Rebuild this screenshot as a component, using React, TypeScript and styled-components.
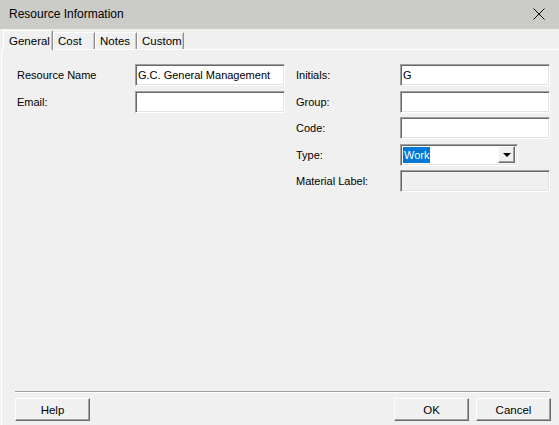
import styled, { createGlobalStyle } from 'styled-components';

const GlobalStyle = createGlobalStyle`
   html, body {
      margin: 0;
      padding: 0;
      background: #f0f0f0;
   }
   * {
      box-sizing: border-box;
   }
`;

const font = `'Segoe UI', 'Liberation Sans', Arial, sans-serif`;

const Window = styled.div`
   width: 559px;
   height: 425px;
   display: flex;
   flex-direction: column;
   background: #f0f0f0;
   font-family: ${font};
   font-size: 11px;
   color: #000;
   overflow: hidden;
`;

const TitleBar = styled.div`
   height: 29px;
   flex: none;
   display: flex;
   align-items: center;
   justify-content: space-between;
   padding: 0 14px 1px 9px;
   background: #cbccc8;
`;

const TitleText = styled.span`
   font-size: 12px;
`;

const CloseIcon = styled.svg`
   width: 12px;
   height: 12px;
   display: block;
`;

const TabStrip = styled.div`
   height: 20px;
   flex: none;
   display: flex;
   align-items: flex-end;
   padding-left: 3px;
`;

const Tab = styled.div<{ $active?: boolean; $width: number }>`
   height: ${(p) => (p.$active ? '20px' : '17px')};
   width: ${(p) => p.$width}px;
   padding: ${(p) => (p.$active ? '3px 0 0 5px' : '1px 0 0 4px')};
   border-left: 1px solid #fff;
   border-top: 1px solid #fff;
   border-right: 1px solid #8e8e8e;
   box-shadow: inset -1px 0 0 #c8c8c8;
   background: #f0f0f0;
   font-size: 11.5px;
   line-height: 15px;
   white-space: nowrap;
   position: relative;
   z-index: ${(p) => (p.$active ? 1 : 0)};
   margin-bottom: ${(p) => (p.$active ? '-1px' : '0')};
`;

const Panel = styled.div`
   flex: 1;
   display: flex;
   flex-direction: column;
   border-top: 1px solid #fff;
   border-left: 1px solid #fff;
   margin-left: 1px;
   padding: 14px 8px 4px 13px;
`;

const Form = styled.div`
   display: grid;
   grid-template-columns: 120px 150px 9px 106px 150px;
   grid-auto-rows: 22px;
   row-gap: 4.5px;
   align-items: center;
`;

const Label = styled.label<{ $col: number }>`
   grid-column: ${(p) => p.$col};
   padding-left: 2px;
   font-size: 11px;
`;

const Field = styled.div<{ $col: number; $disabled?: boolean }>`
   grid-column: ${(p) => p.$col};
   height: 22px;
   display: flex;
   align-items: center;
   padding-left: 2px;
   background: ${(p) => (p.$disabled ? '#f0f0f0' : '#fff')};
   border-top: 1px solid #a0a0a0;
   border-left: 1px solid #a0a0a0;
   border-right: 1px solid #fff;
   border-bottom: 1px solid #fff;
   box-shadow: inset 1px 1px 0 #696969, inset -1px -1px 0 #e3e3e3;
   font-size: 11px;
   white-space: nowrap;
`;

const Select = styled(Field)`
   width: 118px;
   padding: 0 2px 0 2px;
   justify-content: space-between;
`;

const Selected = styled.span`
   background: #0078d7;
   color: #fff;
   line-height: 16px;
   padding: 0 1px;
`;

const DropButton = styled.div`
   width: 17px;
   height: 17px;
   display: flex;
   align-items: center;
   justify-content: center;
   background: #f0f0f0;
   border-top: 1px solid #fff;
   border-left: 1px solid #fff;
   border-right: 1px solid #696969;
   border-bottom: 1px solid #696969;
   box-shadow: inset -1px -1px 0 #a0a0a0;
`;

const Arrow = styled.span`
   width: 0;
   height: 0;
   border-left: 4px solid transparent;
   border-right: 4px solid transparent;
   border-top: 4px solid #000;
   margin-top: 1px;
`;

const Spacer = styled.div`
   flex: 1;
`;

const Separator = styled.div`
   height: 2px;
   width: 535px;
   border-top: 1px solid #a0a0a0;
   border-bottom: 1px solid #fff;
`;

const Footer = styled.div`
   display: flex;
   align-items: center;
   margin-top: 5px;
   gap: 7px;
`;

const Button = styled.button`
   width: 75px;
   height: 23px;
   padding: 0;
   background: #f0f0f0;
   border-top: 1px solid #fff;
   border-left: 1px solid #fff;
   border-right: 1px solid #696969;
   border-bottom: 1px solid #696969;
   box-shadow: inset -1px -1px 0 #a0a0a0;
   font-family: ${font};
   font-size: 11.5px;
   color: #000;
`;

const PushRight = styled.div`
   flex: 1;
`;

const tabs = [
   { name: 'General', width: 50 },
   { name: 'Cost', width: 42 },
   { name: 'Notes', width: 42 },
   { name: 'Custom', width: 47 },
];

export default function App() {
   return (
      <>
         <GlobalStyle />
         <Window>
            <TitleBar>
               <TitleText>Resource Information</TitleText>
               <CloseIcon viewBox="0 0 12 12">
                  <path d="M0.5 0.5 L11.5 11.5 M11.5 0.5 L0.5 11.5" stroke="#000" strokeWidth="1" />
               </CloseIcon>
            </TitleBar>
            <TabStrip>
               {tabs.map((t, i) => (
                  <Tab key={t.name} $active={i === 0} $width={t.width}>
                     {t.name}
                  </Tab>
               ))}
            </TabStrip>
            <Panel>
               <Form>
                  <Label $col={1}>Resource Name</Label>
                  <Field $col={2}>G.C. General Management</Field>
                  <Label $col={4}>Initials:</Label>
                  <Field $col={5}>G</Field>

                  <Label $col={1}>Email:</Label>
                  <Field $col={2} />
                  <Label $col={4}>Group:</Label>
                  <Field $col={5} />

                  <Label $col={4}>Code:</Label>
                  <Field $col={5} />

                  <Label $col={4}>Type:</Label>
                  <Select $col={5}>
                     <Selected>Work</Selected>
                     <DropButton>
                        <Arrow />
                     </DropButton>
                  </Select>

                  <Label $col={4}>Material Label:</Label>
                  <Field $col={5} $disabled />
               </Form>
               <Spacer />
               <Separator />
               <Footer>
                  <Button>Help</Button>
                  <PushRight />
                  <Button>OK</Button>
                  <Button>Cancel</Button>
               </Footer>
            </Panel>
         </Window>
      </>
   );
}
